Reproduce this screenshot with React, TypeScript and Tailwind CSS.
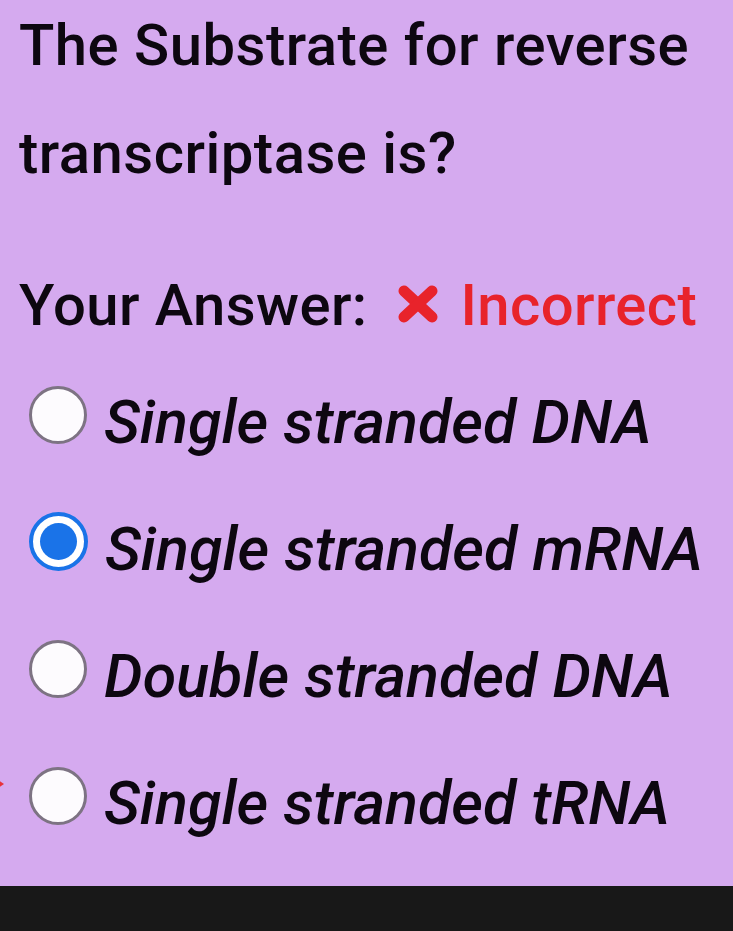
import React from "react";

function Radio({ checked }: { checked?: boolean }) {
  if (checked) {
    return (
      <div className="mb-4 ml-[29px] flex h-[59px] w-[59px] shrink-0 items-center justify-center rounded-full border-[4px] border-[#1a73e8] bg-white">
        <div className="h-[37px] w-[37px] rounded-full bg-[#1a73e8]" />
      </div>
    );
  }
  return (
    <div className="mb-4 ml-[29px] h-[58px] w-[58px] shrink-0 rounded-full border-[3px] border-[#7d7383] bg-[#fdfbfe]" />
  );
}

function Option({ label, checked, marker }: { label: string; checked?: boolean; marker?: boolean }) {
  return (
    <div className="relative flex h-[127px] items-center">
      {marker && (
        <div className="absolute left-[-5px] top-[38px] h-0 w-0 border-y-[6px] border-l-[9px] border-y-transparent border-l-[#e8323a]" />
      )}
      <Radio checked={checked} />
      <span className="ml-[17px] text-[61px] font-medium italic leading-none tracking-normal text-[#0d0710]">{label}</span>
    </div>
  );
}

export default function App() {
  return (
    <div className="flex h-[931px] w-[733px] flex-col overflow-hidden bg-[#181818]" style={{ fontFamily: "Roboto, 'Liberation Sans', sans-serif" }}>
      <div className="h-[886px] w-full bg-[#d5aaef] px-[19px]">
        <p className="mt-[-9px] text-[58px] font-medium leading-[108px] tracking-[0.5px] text-[#0d0710]">
          The Substrate for reverse
          <br />
          transcriptase is?
        </p>
        <div className="mt-[66px] flex h-[64px] items-center text-[58px] font-medium leading-none tracking-[0.4px] text-[#0d0710]">
          <span>Your Answer:</span>
          <svg className="ml-[30px] mb-[2px]" width="42" height="40" viewBox="0 0 42 40">
            <line x1="7" y1="7" x2="35" y2="33" stroke="#e8232b" strokeWidth="11" strokeLinecap="round" />
            <line x1="35" y1="7" x2="7" y2="33" stroke="#e8232b" strokeWidth="11" strokeLinecap="round" />
          </svg>
          <span className="ml-[21px] text-[#e8232b]">Incorrect</span>
        </div>
        <div className="ml-[-19px] mt-[22px] flex flex-col">
          <Option label="Single stranded DNA" />
          <Option label="Single stranded mRNA" checked />
          <Option label="Double stranded DNA" />
          <Option label="Single stranded tRNA" marker />
        </div>
      </div>
    </div>
  );
}
